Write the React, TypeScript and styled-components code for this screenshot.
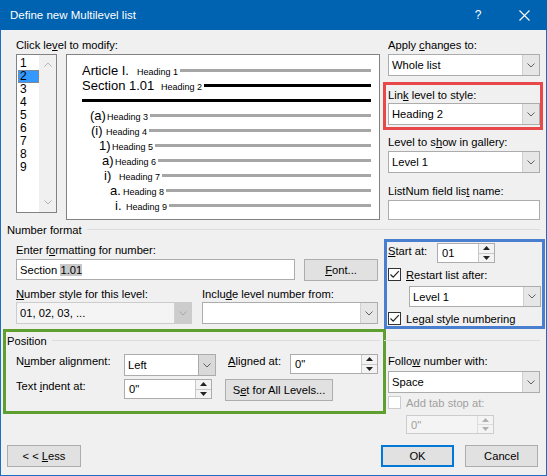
import React from "react";
import styled, { createGlobalStyle } from "styled-components";

const GlobalStyle = createGlobalStyle`
  html, body { margin: 0; padding: 0; }
  body {
    font-family: "Liberation Sans", Arial, sans-serif;
    font-size: 11.2px;
    color: #000;
    background: #fff;
  }
  * { box-sizing: border-box; }
`;

const Window = styled.div`
  width: 547px;
  height: 476px;
  display: flex;
  flex-direction: column;
  background: #f0f0f0;
`;

const TitleBar = styled.div`
  height: 30px;
  flex: none;
  display: flex;
  align-items: center;
  padding-left: 10px;
  background: #0063b1;
  color: #fff;
  font-size: 11.5px;
`;

const TitleTools = styled.div`
  margin-left: auto;
  display: flex;
  height: 100%;
`;

const CaptionButton = styled.div`
  width: 46px;
  height: 100%;
  display: flex;
  align-items: center;
  justify-content: center;
  font-size: 12px;
`;

const Body = styled.div`
  flex: 1;
  display: flex;
  flex-direction: column;
  padding: 8px 6px 0;
  border: 1px solid #1b6ec2;
  border-top: none;
`;

const Band = styled.div`
  display: grid;
  grid-template-columns: 373px 152px;
  column-gap: 8px;
  align-items: start;
`;

const Column = styled.div<{ $pl?: number; $pt?: number }>`
  display: flex;
  flex-direction: column;
  padding-left: ${(p) => p.$pl ?? 0}px;
  padding-top: ${(p) => p.$pt ?? 0}px;
`;

const Label = styled.div<{ $mt?: number; $disabled?: boolean }>`
  height: 15px;
  line-height: 15px;
  margin-top: ${(p) => p.$mt ?? 0}px;
  white-space: nowrap;
  color: ${(p) => (p.$disabled ? "#a0a0a0" : "#000")};
`;

const U = styled.span`
  text-decoration: underline;
`;

/* level list + preview */

const PreviewRowWrap = styled.div`
  display: flex;
  gap: 9px;
  margin-top: 1px;
  align-items: flex-start;
`;

const LevelList = styled.div`
  width: 41px;
  height: 159px;
  display: flex;
  border: 1px solid #828282;
  background: #fff;
`;

const LevelItems = styled.div`
  width: 22px;
  padding: 2px 0 0 1px;
`;

const LevelItem = styled.div<{ $selected?: boolean }>`
  height: 13px;
  line-height: 13px;
  padding-left: 2px;
  font-size: 12px;
  background: ${(p) => (p.$selected ? "#3399ff" : "transparent")};
  outline: ${(p) => (p.$selected ? "1px dotted #c07a3a" : "none")};
  outline-offset: -1px;
`;

const ScrollTrack = styled.div`
  width: 17px;
  display: flex;
  flex-direction: column;
  justify-content: space-between;
  align-items: center;
  padding: 7px 0 7px;
  background: #f0f0f0;
`;

const Preview = styled.div`
  width: 314px;
  height: 166px;
  padding: 8px 8px 0 0;
  border: 1px solid #828282;
  background: #fff;
  font-family: "Liberation Sans", Arial, sans-serif;
`;

const PreviewLine = styled.div`
  height: 15px;
  display: flex;
  align-items: center;
`;

const PreviewText = styled.div`
  display: flex;
  align-items: baseline;
  white-space: nowrap;
`;

const LevelNum = styled.span<{ $x: number; $w: number }>`
  display: inline-block;
  margin-left: ${(p) => p.$x}px;
  width: ${(p) => p.$w}px;
  font-size: 13px;
  line-height: 15px;
`;

const HeadingText = styled.span`
  font-size: 9px;
`;

const Bar = styled.div<{ $dark?: boolean; $ml?: number }>`
  flex: 1;
  height: 3px;
  margin-left: ${(p) => p.$ml ?? 2}px;
  background: ${(p) => (p.$dark ? "#000" : "#a6a6a6")};
`;

/* form controls */

const ComboFrame = styled.div<{ $width?: number; $height: number; $mt: number; $ml: number; $disabled?: boolean }>`
  display: flex;
  flex: none;
  width: ${(p) => (p.$width ? `${p.$width}px` : "100%")};
  height: ${(p) => p.$height}px;
  margin-top: ${(p) => p.$mt}px;
  margin-left: ${(p) => p.$ml}px;
  border: 1px solid ${(p) => (p.$disabled ? "#cccccc" : "#acacac")};
  background: ${(p) => (p.$disabled ? "#f4f4f4" : "#fff")};
`;

const ComboText = styled.div`
  flex: 1;
  display: flex;
  align-items: center;
  padding-left: 3px;
  white-space: nowrap;
  overflow: hidden;
`;

const ComboButton = styled.div<{ $tone: "normal" | "dim" | "disabled" }>`
  width: 17px;
  flex: none;
  display: flex;
  align-items: center;
  justify-content: center;
  background: ${(p) => (p.$tone === "normal" ? "#e6e6e6" : p.$tone === "dim" ? "#d9d9d9" : "#cccccc")};
  border-left: 1px solid ${(p) => (p.$tone === "dim" ? "#acacac" : "#d0d0d0")};
`;

const TextBox = styled.div<{ $width?: number; $height: number; $mt?: number }>`
  display: flex;
  align-items: center;
  width: ${(p) => (p.$width ? `${p.$width}px` : "100%")};
  height: ${(p) => p.$height}px;
  margin-top: ${(p) => p.$mt ?? 0}px;
  padding-left: 3px;
  border: 1px solid #acacac;
  background: #fff;
  white-space: nowrap;
`;

const FieldMark = styled.span`
  background: #c8c8c8;
`;

const SpinFrame = styled.div<{ $width: number; $height: number; $mt?: number; $ml?: number; $disabled?: boolean }>`
  display: flex;
  width: ${(p) => p.$width}px;
  height: ${(p) => p.$height}px;
  margin-top: ${(p) => p.$mt ?? 0}px;
  margin-left: ${(p) => p.$ml ?? 0}px;
  border: 1px solid ${(p) => (p.$disabled ? "#cccccc" : "#acacac")};
  background: ${(p) => (p.$disabled ? "#f4f4f4" : "#fff")};
  color: ${(p) => (p.$disabled ? "#a0a0a0" : "#000")};
`;

const SpinText = styled.div`
  flex: 1;
  display: flex;
  align-items: center;
  padding-left: 4px;
`;

const SpinButtons = styled.div<{ $disabled?: boolean }>`
  width: 16px;
  display: flex;
  flex-direction: column;
  border-left: 1px solid ${(p) => (p.$disabled ? "#dddddd" : "#c8c8c8")};
`;

const SpinHalf = styled.div<{ $lower?: boolean; $disabled?: boolean }>`
  flex: 1;
  display: flex;
  align-items: center;
  justify-content: center;
  background: ${(p) => (p.$disabled ? "#f4f4f4" : "#f3f3f3")};
  border-top: ${(p) => (p.$lower ? `1px solid ${p.$disabled ? "#dddddd" : "#c8c8c8"}` : "none")};
`;

const Button = styled.div<{ $width: number; $default?: boolean }>`
  width: ${(p) => p.$width}px;
  height: 22px;
  display: flex;
  align-items: center;
  justify-content: center;
  flex: none;
  background: #e1e1e1;
  border: ${(p) => (p.$default ? "2px solid #0078d7" : "1px solid #adadad")};
  white-space: pre;
`;

const CheckRow = styled.div<{ $mt?: number; $disabled?: boolean }>`
  display: flex;
  align-items: center;
  gap: 5px;
  height: 15px;
  margin-top: ${(p) => p.$mt ?? 0}px;
  color: ${(p) => (p.$disabled ? "#a0a0a0" : "#000")};
  white-space: nowrap;
`;

const Box = styled.span<{ $disabled?: boolean }>`
  width: 13px;
  height: 13px;
  flex: none;
  display: flex;
  align-items: center;
  justify-content: center;
  border: 1px solid ${(p) => (p.$disabled ? "#cccccc" : "#333333")};
  background: #fff;
`;

/* group headers and highlight frames */

const GroupHeader = styled.div<{ $mt?: number }>`
  display: flex;
  align-items: center;
  gap: 5px;
  height: 15px;
  margin-top: ${(p) => p.$mt ?? 0}px;
  white-space: nowrap;
  &::after {
    content: "";
    flex: 1;
    height: 1px;
    background: #dcdcdc;
  }
`;

const Rule = styled.div`
  height: 1px;
  margin: 11px 0 0 -4px;
  background: #dcdcdc;
`;

const RedMark = styled.div`
  margin: 6px -3px 0 -5px;
  padding: 3px 0 2px 2px;
  border: 3px solid #e8484a;
`;

const BlueMark = styled.div`
  height: 90px;
  margin: 2px -5px 0 -4px;
  padding: 1px 0 0 1px;
  border: 3px solid #4a7ecf;
`;

const GreenMark = styled.div`
  margin: 0 -6px 0 -4px;
  padding: 1px 3px 10px 1px;
  border: 3px solid #5e9f2f;
`;

const FormatRow = styled.div`
  display: flex;
  gap: 9px;
  margin-top: 1px;
`;

const PairGrid = styled.div`
  display: grid;
  grid-template-columns: 176px 176px;
  column-gap: 10px;
  margin-top: 6px;
`;

const PositionGrid = styled.div`
  display: grid;
  grid-template-columns: 108px 101px 65px 88px;
  row-gap: 3px;
  align-items: start;
  margin-top: 6px;
  padding-left: 9px;
`;

const WideCell = styled.div`
  grid-column: span 2;
`;

const StartRow = styled.div`
  display: flex;
  align-items: flex-start;
`;

const StartLabel = styled(Label)`
  width: 49px;
  margin-top: 1px;
`;

const Footer = styled.div`
  display: flex;
  justify-content: space-between;
  margin-top: 11px;
  padding-right: 2px;
`;

const FooterGroup = styled.div`
  display: flex;
  gap: 11px;
`;

/* small drawings */

const Chevron = ({ color = "#606060", up = false }: { color?: string; up?: boolean }) => (
  <svg width="8" height="5" viewBox="0 0 8 5">
    <polyline
      points={up ? "0.5,4.5 4,1 7.5,4.5" : "0.5,0.5 4,4 7.5,0.5"}
      fill="none"
      stroke={color}
      strokeWidth="1"
    />
  </svg>
);

const Triangle = ({ up, color }: { up?: boolean; color: string }) => (
  <svg width="7" height="4" viewBox="0 0 7 4">
    <polygon points={up ? "0,4 3.5,0 7,4" : "0,0 7,0 3.5,4"} fill={color} />
  </svg>
);

const Tick = () => (
  <svg width="11" height="11" viewBox="0 0 11 11">
    <polyline points="1.5,5.5 4.2,8.2 9.8,2.2" fill="none" stroke="#222" strokeWidth="1.2" />
  </svg>
);

type ComboProps = {
  value: string;
  width?: number;
  height?: number;
  mt?: number;
  ml?: number;
  tone?: "normal" | "dim" | "disabled";
};

const Combo = ({ value, width, height = 22, mt = 0, ml = 0, tone = "normal" }: ComboProps) => (
  <ComboFrame $width={width} $height={height} $mt={mt} $ml={ml} $disabled={tone === "disabled"}>
    <ComboText>{value}</ComboText>
    <ComboButton $tone={tone}>
      <Chevron color={tone === "disabled" ? "#a8a8a8" : "#606060"} />
    </ComboButton>
  </ComboFrame>
);

type SpinProps = { value: string; width: number; height?: number; mt?: number; ml?: number; disabled?: boolean };

const Spin = ({ value, width, height = 20, mt, ml, disabled }: SpinProps) => (
  <SpinFrame $width={width} $height={height} $mt={mt} $ml={ml} $disabled={disabled}>
    <SpinText>{value}</SpinText>
    <SpinButtons $disabled={disabled}>
      <SpinHalf $disabled={disabled}>
        <Triangle up color={disabled ? "#b0b0b0" : "#222"} />
      </SpinHalf>
      <SpinHalf $lower $disabled={disabled}>
        <Triangle color={disabled ? "#b0b0b0" : "#222"} />
      </SpinHalf>
    </SpinButtons>
  </SpinFrame>
);

const previewLevels = [
  { num: "Article I.", numX: 82, headX: 137, head: "Heading 1" },
  { num: "Section 1.01", numX: 82, headX: 161, head: "Heading 2", dark: true },
  { num: "(a)", numX: 90, headX: 107, head: "Heading 3" },
  { num: "(i)", numX: 91, headX: 106, head: "Heading 4" },
  { num: "1)", numX: 99, headX: 112, head: "Heading 5" },
  { num: "a)", numX: 102, headX: 115, head: "Heading 6" },
  { num: "i)", numX: 104, headX: 119, head: "Heading 7" },
  { num: "a.", numX: 110, headX: 123, head: "Heading 8" },
  { num: "i.", numX: 115, headX: 126, head: "Heading 9" },
];

const PREVIEW_LEFT = 67;

const App = () => {
  return (
    <>
      <GlobalStyle />
      <Window>
        <TitleBar>
          Define new Multilevel list
          <TitleTools>
            <CaptionButton>?</CaptionButton>
            <CaptionButton>
              <svg width="11" height="11" viewBox="0 0 11 11">
                <path d="M0.5 0.5 L10.5 10.5 M10.5 0.5 L0.5 10.5" stroke="#fff" strokeWidth="1.1" />
              </svg>
            </CaptionButton>
          </TitleTools>
        </TitleBar>

        <Body>
          <Band>
            <Column $pl={9}>
              <Label>
                Click le<U>v</U>el to modify:
              </Label>
              <PreviewRowWrap>
                <LevelList>
                  <LevelItems>
                    {[1, 2, 3, 4, 5, 6, 7, 8, 9].map((n) => (
                      <LevelItem key={n} $selected={n === 2}>
                        {n}
                      </LevelItem>
                    ))}
                  </LevelItems>
                  <ScrollTrack>
                    <Chevron up color="#b4b4b4" />
                    <Chevron color="#b4b4b4" />
                  </ScrollTrack>
                </LevelList>
                <Preview>
                  {previewLevels.map((lvl, i) => (
                    <React.Fragment key={lvl.head}>
                      <PreviewLine>
                        <PreviewText>
                          <LevelNum $x={lvl.numX - PREVIEW_LEFT} $w={lvl.headX - lvl.numX}>
                            {lvl.num}
                          </LevelNum>
                          <HeadingText>{lvl.head}</HeadingText>
                        </PreviewText>
                        <Bar $dark={lvl.dark} />
                      </PreviewLine>
                      {i === 1 && (
                        <PreviewLine>
                          <Bar $dark $ml={15} />
                        </PreviewLine>
                      )}
                    </React.Fragment>
                  ))}
                </Preview>
              </PreviewRowWrap>
            </Column>

            <Column>
              <Label>
                Apply <U>c</U>hanges to:
              </Label>
              <Combo value="Whole list" mt={1} />
              <RedMark>
                <Label>
                  Lin<U>k</U> level to style:
                </Label>
                <Combo value="Heading 2" />
              </RedMark>
              <Label $mt={5}>
                Level to s<U>h</U>ow in gallery:
              </Label>
              <Combo value="Level 1" mt={1} />
              <Label $mt={11}>
                ListNum field lis<U>t</U> name:
              </Label>
              <TextBox $height={20} $mt={1} />
            </Column>
          </Band>

          <GroupHeader $mt={2}>Number format</GroupHeader>

          <Band>
            <Column $pl={9} $pt={6}>
              <Label>
                Enter f<U>o</U>rmatting for number:
              </Label>
              <FormatRow>
                <TextBox $width={279} $height={21}>
                  <span>
                    Section <FieldMark>1.01</FieldMark>
                  </span>
                </TextBox>
                <Button $width={74}>
                  <span>
                    <U>F</U>ont...
                  </span>
                </Button>
              </FormatRow>
              <PairGrid>
                <div>
                  <Label>
                    <U>N</U>umber style for this level:
                  </Label>
                  <Combo value="01, 02, 03, ..." tone="disabled" />
                </div>
                <div>
                  <Label>
                    Inclu<U>d</U>e level number from:
                  </Label>
                  <Combo value="" />
                </div>
              </PairGrid>
            </Column>

            <BlueMark>
              <StartRow>
                <StartLabel>
                  <U>S</U>tart at:
                </StartLabel>
                <Spin value="01" width={58} />
              </StartRow>
              <CheckRow $mt={4}>
                <Box>
                  <Tick />
                </Box>
                <span>
                  <U>R</U>estart list after:
                </span>
              </CheckRow>
              <Combo value="Level 1" width={132} height={21} mt={4} ml={21} />
              <CheckRow $mt={4}>
                <Box>
                  <Tick />
                </Box>
                <span>
                  Le<U>g</U>al style numbering
                </span>
              </CheckRow>
            </BlueMark>
          </Band>

          <Band>
            <GreenMark>
              <GroupHeader>Position</GroupHeader>
              <PositionGrid>
                <Label>
                  N<U>u</U>mber alignment:
                </Label>
                <Combo value="Left" width={92} tone="dim" />
                <Label>
                  &nbsp;<U>A</U>ligned at:
                </Label>
                <Spin value={'0"'} width={88} />

                <Label>
                  Text <U>i</U>ndent at:
                </Label>
                <Spin value={'0"'} width={88} />
                <WideCell>
                  <Button $width={108}>
                    <span>
                      S<U>e</U>t for All Levels...
                    </span>
                  </Button>
                </WideCell>
              </PositionGrid>
            </GreenMark>

            <Column>
              <Rule />
              <Label $mt={13}>
                Follo<U>w</U> number with:
              </Label>
              <Combo value="Space" mt={2} />
              <CheckRow $mt={2} $disabled>
                <Box $disabled />
                <span>Add tab stop at:</span>
              </CheckRow>
              <Spin value={'0"'} width={88} height={19} mt={5} ml={18} disabled />
            </Column>
          </Band>

          <Footer>
            <Button $width={74}>
              <span>
                {"< < "}
                <U>L</U>ess
              </span>
            </Button>
            <FooterGroup>
              <Button $width={73} $default>
                OK
              </Button>
              <Button $width={73}>Cancel</Button>
            </FooterGroup>
          </Footer>
        </Body>
      </Window>
    </>
  );
};

export default App;
